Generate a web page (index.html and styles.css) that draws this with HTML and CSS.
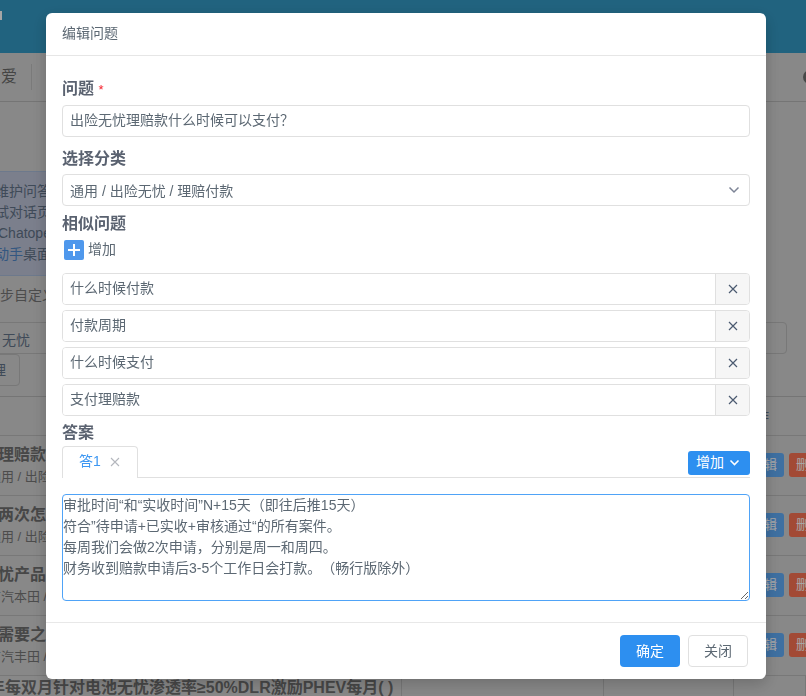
FILE: index.html
```html
<!DOCTYPE html>
<html lang="zh-CN">
<head>
<meta charset="utf-8">
<title>编辑问题</title>
<link rel="stylesheet" href="styles.css">
</head>
<body>
<div class="page">
  <header class="topbar"><span class="logo-edge"></span></header>
  <nav class="navbar">
    <span class="nav-user">爱</span>
    <span class="nav-divider"></span>
    <span class="nav-spacer"></span>
    <span class="nav-avatar"></span>
  </nav>
  <section class="notice">
    <p class="notice-line clip">维护问答</p>
    <p class="notice-line clip">试对话页</p>
    <p class="notice-line latin">Chatopera</p>
    <p class="notice-line clip"><span class="notice-link">动手</span>桌面</p>
  </section>
  <p class="hint">步自定义</p>
  <div class="filters">
    <div class="filter-box filter-left"><span class="filter-text">无忧</span></div>
    <div class="filter-box filter-right"></div>
  </div>
  <div class="filter-actions"><span class="filter-btn">管理</span></div>
  <div class="table">
    <div class="row row-head">
      <div class="cell"></div><div class="cell"></div><div class="cell"></div>
      <div class="cell head-ops">操作</div>
    </div>
    <div class="row">
      <div class="cell"><div class="row-title">理赔款</div><div class="row-sub">通用 / 出险无忧</div></div>
      <div class="cell"></div><div class="cell"></div>
      <div class="cell row-actions"><span class="act act-edit">编辑</span><span class="act act-del">删除</span></div>
    </div>
    <div class="row">
      <div class="cell"><div class="row-title">两次怎</div><div class="row-sub">通用 / 出险无忧</div></div>
      <div class="cell"></div><div class="cell"></div>
      <div class="cell row-actions"><span class="act act-edit">编辑</span><span class="act act-del">删除</span></div>
    </div>
    <div class="row">
      <div class="cell"><div class="row-title">忧产品</div><div class="row-sub">广汽本田 / 出险</div></div>
      <div class="cell"></div><div class="cell"></div>
      <div class="cell row-actions"><span class="act act-edit">编辑</span><span class="act act-del">删除</span></div>
    </div>
    <div class="row">
      <div class="cell"><div class="row-title">需要之</div><div class="row-sub">广汽丰田 / 出险</div></div>
      <div class="cell"></div><div class="cell"></div>
      <div class="cell row-actions"><span class="act act-edit">编辑</span><span class="act act-del">删除</span></div>
    </div>
    <div class="row row-last">
      <div class="cell"><div class="row-title title-long">年每双月针对电池无忧渗透率≥50%DLR激励PHEV每月( )</div></div>
      <div class="cell"></div><div class="cell"></div><div class="cell"></div>
    </div>
  </div>
</div>

<div class="backdrop"></div>

<div class="modal">
  <div class="modal-header">编辑问题</div>
  <div class="modal-body">
    <label class="field-label first">问题 <span class="req">*</span></label>
    <input class="control" type="text" value="出险无忧理赔款什么时候可以支付？">

    <label class="field-label label-cat">选择分类</label>
    <div class="control select-control">
      <span>通用 / 出险无忧 / 理赔付款</span>
      <svg class="chevron" width="12" height="8" viewBox="0 0 12 8"><path d="M1.500 1.500 6 6l4.500-4.500" fill="none" stroke="#7d8496" stroke-width="1.500"/></svg>
    </div>

    <label class="field-label label-sim">相似问题</label>
    <div class="add-row">
      <span class="add-icon"><svg width="20" height="20" viewBox="0 0 20 20"><path d="M10 4v12M4 10h12" stroke="#fff" stroke-width="2"/></svg></span>
      <span class="add-text">增加</span>
    </div>

    <div class="similar-list">
      <div class="input-group"><input class="group-input" type="text" value="什么时候付款"><span class="group-close"><svg width="10" height="10" viewBox="0 0 10 10"><path d="M1 1l8 8M9 1 1 9" stroke="#4b5a70" stroke-width="1.200"/></svg></span></div>
      <div class="input-group"><input class="group-input" type="text" value="付款周期"><span class="group-close"><svg width="10" height="10" viewBox="0 0 10 10"><path d="M1 1l8 8M9 1 1 9" stroke="#4b5a70" stroke-width="1.200"/></svg></span></div>
      <div class="input-group"><input class="group-input" type="text" value="什么时候支付"><span class="group-close"><svg width="10" height="10" viewBox="0 0 10 10"><path d="M1 1l8 8M9 1 1 9" stroke="#4b5a70" stroke-width="1.200"/></svg></span></div>
      <div class="input-group"><input class="group-input" type="text" value="支付理赔款"><span class="group-close"><svg width="10" height="10" viewBox="0 0 10 10"><path d="M1 1l8 8M9 1 1 9" stroke="#4b5a70" stroke-width="1.200"/></svg></span></div>
    </div>

    <label class="field-label label-ans">答案</label>
    <div class="tabs">
      <div class="tab"><span class="tab-name">答1</span><svg class="tab-x" width="10" height="10" viewBox="0 0 10 10"><path d="M1 1l8 8M9 1 1 9" stroke="#b4b7bd" stroke-width="1.100"/></svg></div>
      <button class="tab-add" type="button"><span class="tab-add-text">增加</span><svg width="11" height="8" viewBox="0 0 11 8"><path d="M1.500 1.500 5.500 5.500l4-4" fill="none" stroke="#fff" stroke-width="1.600"/></svg></button>
    </div>
    <textarea class="answer" rows="5">审批时间“和“实收时间”N+15天（即往后推15天）
符合”待申请+已实收+审核通过“的所有案件。
每周我们会做2次申请，分别是周一和周四。
财务收到赔款申请后3-5个工作日会打款。（畅行版除外）</textarea>
  </div>
  <div class="modal-footer">
    <button class="btn btn-primary" type="button">确定</button>
    <button class="btn btn-ghost" type="button">关闭</button>
  </div>
</div>
</body>
</html>
```
FILE: styles.css
```css
* { box-sizing: border-box; }
html, body { margin: 0; padding: 0; height: 100%; overflow: hidden; }
body {
  font-family: "Liberation Sans", "Noto Sans CJK SC", sans-serif;
  font-size: 14px;
  color: #5c6873;
  background: #d1d1d1;
  text-spacing-trim: space-all;
}

/* page behind the dialog */
.page { width: 806px; height: 696px; overflow: hidden; background: #d1d1d1; color: #617287; }
.topbar { height: 53px; background: #3398c3; padding-top: 11px; }
.logo-edge { display: block; width: 2px; height: 9px; background: #fff; }
.navbar { height: 49px; display: flex; align-items: center; border-bottom: 1px solid #b4b4b4; color: #696969; }
.nav-user { font-size: 16px; margin-left: 1px; line-height: 22px; }
.nav-divider { width: 1px; height: 26px; background: #bcbcbc; margin-left: 14px; }
.nav-spacer { flex: 1; }
.nav-avatar { width: 14px; height: 14px; border-radius: 50%; background: #6f6f6f; margin-right: -11px; flex: none; }

.notice { margin: 69px 0 0; height: 105px; width: 740px; background: #bdc3d7; border-top: 1px solid #a8bbd8; border-bottom: 1px solid #a8bbd8; padding-top: 9px; }
.notice-line { margin: 0; line-height: 21px; height: 21px; white-space: nowrap; }
.notice-line.clip { margin-left: -5px; }
.notice-line.latin { margin-left: -2px; }
.notice-link { color: #4f86c6; }
.hint { margin: 9px 0 0; line-height: 20px; color: #767676; }

.filters { display: flex; justify-content: space-between; margin-top: 17px; height: 32px; }
.filter-box { height: 32px; border: 1px solid #b8b8b8; border-radius: 4px; }
.filter-left { width: 300px; margin-left: -10px; border-left: 0; padding-left: 12px; line-height: 34px; font-size: 14px; }
.filter-right { width: 220px; margin-right: 19px; }
.filter-actions { height: 43px; border-bottom: 1px solid #b4b4b4; }
.filter-btn { display: block; width: 50px; height: 32px; margin-left: -30px; padding-left: 7px; border: 1px solid #b8b8b8; border-radius: 4px; line-height: 30px; }

.table { width: 806px; }
.row { display: grid; grid-template-columns: 402px 202px 130px 72px; height: 60px; border-bottom: 1px solid #b8b8b8; }
.row-head { height: 39px; }
.row-head .head-ops { padding: 9px 0 0 7px; line-height: 20px; overflow: visible; }
.cell { min-width: 0; padding-top: 8px; white-space: nowrap; overflow: hidden; }
.row-title { font-size: 16px; font-weight: 700; line-height: 22px; margin-left: -2px; color: #6e6e6e; }
.row-sub { font-size: 13px; line-height: 20px; margin: 1px 0 0 -12px; color: #767676; }
.row-actions { padding: 17px 0 0 10px; display: flex; align-items: flex-start; gap: 5px; overflow: visible; }
.act { display: block; height: 24px; padding: 0 7px; font-size: 13px; line-height: 24px; border-radius: 3px; color: #fff; flex: none; }
.act-edit { background: #60acf8; }
.act-del { background: #f97252; }
.row-last { height: 40px; }
.row-last .cell { padding-top: 1px; border-right: 1px solid #b8b8b8; overflow: visible; }
.title-long { margin-left: -11px; }

.backdrop { position: fixed; inset: 0; background: rgba(0, 0, 0, .35); }

/* dialog */
.modal { position: fixed; left: 46px; top: 13px; width: 720px; height: 666px; background: #fff; border-radius: 6px; box-shadow: 0 5px 15px rgba(0, 0, 0, .2); display: flex; flex-direction: column; }
.modal-header { height: 43px; padding: 0 16px; line-height: 41px; font-size: 14px; border-bottom: 1px solid #e6e6e6; color: #5c6873; flex: none; }
.modal-body { flex: 1; padding: 22px 16px 0; display: flex; flex-direction: column; }
.field-label { display: block; font-size: 16px; font-weight: 700; line-height: 22px; color: #5a6270; }
.req { color: #f5222d; font-size: 13px; font-weight: 400; line-height: 0; }
.first { margin-bottom: 5px; }
.label-cat { margin: 11px 0 4px; }
.label-sim { margin: 7px 0 5px; }
.label-ans { margin: 6px 0 2px; }

.control, .group-input, .answer { font: inherit; color: #5c6873; outline: none; text-spacing-trim: space-all; }
.control { display: block; width: 688px; height: 32px; padding: 0 7px 4px; border: 1.500px solid #e0e0e0; border-radius: 4px; background: #fff; flex: none; }
.select-control { display: flex; align-items: center; justify-content: space-between; padding-bottom: 0; }
.chevron { margin-right: 2px; }

.add-row { display: flex; align-items: center; height: 20px; padding-left: 2px; margin-bottom: 13px; }
.add-icon { width: 20px; height: 20px; background: #4f98ec; border-radius: 2px; display: block; flex: none; }
.add-icon svg { display: block; }
.add-text { margin-left: 4px; font-size: 14px; padding-bottom: 5px; }

.similar-list { display: flex; flex-direction: column; gap: 5px; }
.input-group { display: flex; width: 688px; height: 32px; border: 1.500px solid #e0e0e0; border-radius: 4px; overflow: hidden; }
.group-input { flex: 1; min-width: 0; height: 100%; border: 0; padding: 0 7px 4px; background: #fff; }
.group-close { width: 34px; flex: none; background: #f6f6f6; border-left: 1.500px solid #e0e0e0; display: flex; align-items: center; justify-content: center; }

.tabs { display: flex; justify-content: space-between; align-items: flex-start; width: 688px; height: 32px; border-bottom: 1.500px solid #e0e0e0; flex: none; }
.tab { width: 76px; height: 32px; background: #fff; border: 1.500px solid #e0e0e0; border-bottom: 0; border-radius: 4px 4px 0 0; display: flex; align-items: center; padding-left: 16px; gap: 9px; }
.tab-name { color: #3d97f2; font-size: 14px; padding-bottom: 5px; }
.tab-x { margin-top: -1px; }
.tab-add { margin-top: 5px; width: 62px; height: 24px; padding: 0 0 0 8px; border: 0; border-radius: 3px; background: #2d8ff0; color: #fff; font: inherit; font-size: 14px; display: flex; align-items: center; gap: 5px; }
.tab-add-text { padding-bottom: 4px; }
.answer { display: block; width: 688px; height: 107px; margin-top: 16px; padding: 0; border: 1.500px solid #4fa3f7; border-radius: 4px; line-height: 21px; resize: both; background: #fff; flex: none; }

.modal-footer { height: 57px; padding: 12px 18px 0 0; border-top: 1px solid #e8e8e8; display: flex; justify-content: flex-end; gap: 8px; flex: none; }
.btn { width: 60px; height: 32px; border-radius: 4px; font: inherit; font-size: 14px; padding: 0 0 3px; }
.btn-primary { background: #2d8ff0; border: 0; color: #fff; }
.btn-ghost { background: #fff; border: 1.500px solid #e0e0e0; color: #5c6873; }
```
